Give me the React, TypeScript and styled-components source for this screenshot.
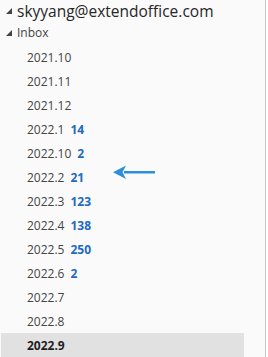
import React from "react";
import styled, { createGlobalStyle } from "styled-components";

const Global = createGlobalStyle`
  html, body { margin: 0; padding: 0; background: #ffffff; }
  body { font-family: "Open Sans", "Noto Sans", sans-serif; }
`;

const Frame = styled.div`
  width: 268px;
  height: 357px;
  display: flex;
  overflow: hidden;
  background: #ffffff;
`;

const Pane = styled.div`
  position: relative;
  width: 265px;
  background: #fafafa;
  border-right: 1px solid #c8c8c8;
  display: flex;
  flex-direction: column;
`;

const Header = styled.div`
  height: 24px;
  display: flex;
  align-items: center;
  gap: 5px;
  padding-left: 6px;
  font-size: 15.5px;
  color: #262626;
`;

const Sub = styled.div`
  height: 22px;
  display: flex;
  align-items: center;
  gap: 5px;
  padding-left: 6px;
  font-size: 12px;
  color: #444;
`;

const List = styled.div`
  padding-top: 2px;
  display: flex;
  flex-direction: column;
`;

const Tri = styled.svg`
  flex: none;
`;

const Row = styled.div<{ $sel?: boolean }>`
  height: 24px;
  display: flex;
  align-items: center;
  padding-left: 26px;
  margin-left: 1px;
  width: 243px;
  box-sizing: border-box;
  font-size: 12px;
  color: ${(p) => (p.$sel ? "#1f1f1f" : "#444")};
  font-weight: ${(p) => (p.$sel ? 700 : 400)};
  background: ${(p) => (p.$sel ? "#e1e1e1" : "transparent")};
`;

const Count = styled.span`
  margin-left: 6px;
  color: #1e6bbf;
  font-weight: 700;
`;

const Arrow = styled.svg`
  position: absolute;
  left: 112px;
  top: 164px;
`;

const items: [string, number?][] = [
  ["2021.10"],
  ["2021.11"],
  ["2021.12"],
  ["2022.1", 14],
  ["2022.10", 2],
  ["2022.2", 21],
  ["2022.3", 123],
  ["2022.4", 138],
  ["2022.5", 250],
  ["2022.6", 2],
  ["2022.7"],
  ["2022.8"],
  ["2022.9"],
];

const Triangle = () => (
  <Tri width="6" height="6" viewBox="0 0 6 6">
    <path d="M6 0 L6 6 L0 6 Z" fill="#444" />
  </Tri>
);

export default function App() {
  return (
    <Frame>
      <Global />
      <Pane>
        <Header>
          <Triangle />
          skyyang@extendoffice.com
        </Header>
        <Sub>
          <Triangle />
          Inbox
        </Sub>
        <List>
          {items.map(([name, n]) => (
            <Row key={name} $sel={name === "2022.9"}>
              {name}
              {n !== undefined && <Count>{n}</Count>}
            </Row>
          ))}
        </List>
        <Arrow width="44" height="16" viewBox="0 0 44 16">
          <path d="M12 7 L43 7 L43 9.5 L12 9.5 Z" fill="#2b8fdc" />
          <path d="M1 8.2 L14 1.5 L10.5 8.2 L14 15 Z" fill="#2b8fdc" />
        </Arrow>
      </Pane>
    </Frame>
  );
}
